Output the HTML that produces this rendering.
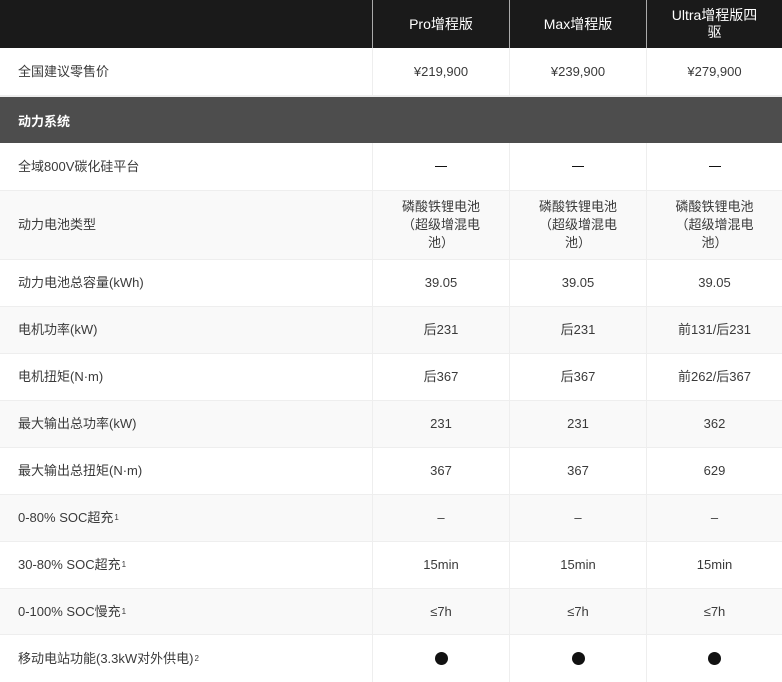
<!DOCTYPE html>
<html><head><meta charset="utf-8"><style>
*{margin:0;padding:0;box-sizing:border-box}
body{width:782px;height:679px;overflow:hidden;background:#fff;font-family:"Liberation Sans","Noto Sans CJK SC",sans-serif;font-size:13px;color:#3a3a3a}
.r{display:flex;position:relative}
.c{display:flex;align-items:center;justify-content:center;text-align:center;border-left:1px solid #eee;line-height:18px}
.c0{width:372px;justify-content:flex-start;padding-left:18px;border-left:none;text-align:left}
.c1{width:137px}.c2{width:137px}.c3{width:136px}
.h{background:#1a1a1a;color:#fff;height:48px;font-size:14px}
.h .c{border-left:1px solid #aaa;line-height:17px}
.h .c0{border-left:none}
.g{background:#f9f9f9}
.sec{background:#4d4d4d;color:#fff;height:48px;font-weight:bold;padding-left:18px;align-items:center;border-top:2px solid #eee;font-size:13px}
.b{border-bottom:1px solid #eee}
sup{font-size:8px;vertical-align:top;line-height:10px;margin-left:1px}
.dot{width:13px;height:13px;border-radius:50%;background:#111}
.dash{width:12px;height:1.5px;background:#111}
</style></head><body>
<div class="r h"><div class="c c0"></div><div class="c c1">Pro增程版</div><div class="c c2">Max增程版</div><div class="c c3">Ultra增程版四<br>驱</div></div>
<div class="r" style="height:47px"><div class="c c0">全国建议零售价</div><div class="c c1">¥219,900</div><div class="c c2">¥239,900</div><div class="c c3">¥279,900</div></div>
<div class="r sec">动力系统</div>
<div class="r b" style="height:48px"><div class="c c0">全域800V碳化硅平台</div><div class="c c1"><div class="dash"></div></div><div class="c c2"><div class="dash"></div></div><div class="c c3"><div class="dash"></div></div></div>
<div class="r g b" style="height:69px"><div class="c c0">动力电池类型</div><div class="c c1">磷酸铁锂电池<br>（超级增混电<br>池）</div><div class="c c2">磷酸铁锂电池<br>（超级增混电<br>池）</div><div class="c c3">磷酸铁锂电池<br>（超级增混电<br>池）</div></div>
<div class="r b" style="height:47px"><div class="c c0">动力电池总容量(kWh)</div><div class="c c1">39.05</div><div class="c c2">39.05</div><div class="c c3">39.05</div></div>
<div class="r g b" style="height:47px"><div class="c c0">电机功率(kW)</div><div class="c c1">后231</div><div class="c c2">后231</div><div class="c c3">前131/后231</div></div>
<div class="r b" style="height:47px"><div class="c c0">电机扭矩(N·m)</div><div class="c c1">后367</div><div class="c c2">后367</div><div class="c c3">前262/后367</div></div>
<div class="r g b" style="height:47px"><div class="c c0">最大输出总功率(kW)</div><div class="c c1">231</div><div class="c c2">231</div><div class="c c3">362</div></div>
<div class="r b" style="height:47px"><div class="c c0">最大输出总扭矩(N·m)</div><div class="c c1">367</div><div class="c c2">367</div><div class="c c3">629</div></div>
<div class="r g b" style="height:47px"><div class="c c0">0-80% SOC超充<sup>1</sup></div><div class="c c1">–</div><div class="c c2">–</div><div class="c c3">–</div></div>
<div class="r b" style="height:47px"><div class="c c0">30-80% SOC超充<sup>1</sup></div><div class="c c1">15min</div><div class="c c2">15min</div><div class="c c3">15min</div></div>
<div class="r g b" style="height:46px"><div class="c c0">0-100% SOC慢充<sup>1</sup></div><div class="c c1">≤7h</div><div class="c c2">≤7h</div><div class="c c3">≤7h</div></div>
<div class="r" style="height:47px"><div class="c c0">移动电站功能(3.3kW对外供电)<sup>2</sup></div><div class="c c1"><div class="dot"></div></div><div class="c c2"><div class="dot"></div></div><div class="c c3"><div class="dot"></div></div></div>
</body></html>
